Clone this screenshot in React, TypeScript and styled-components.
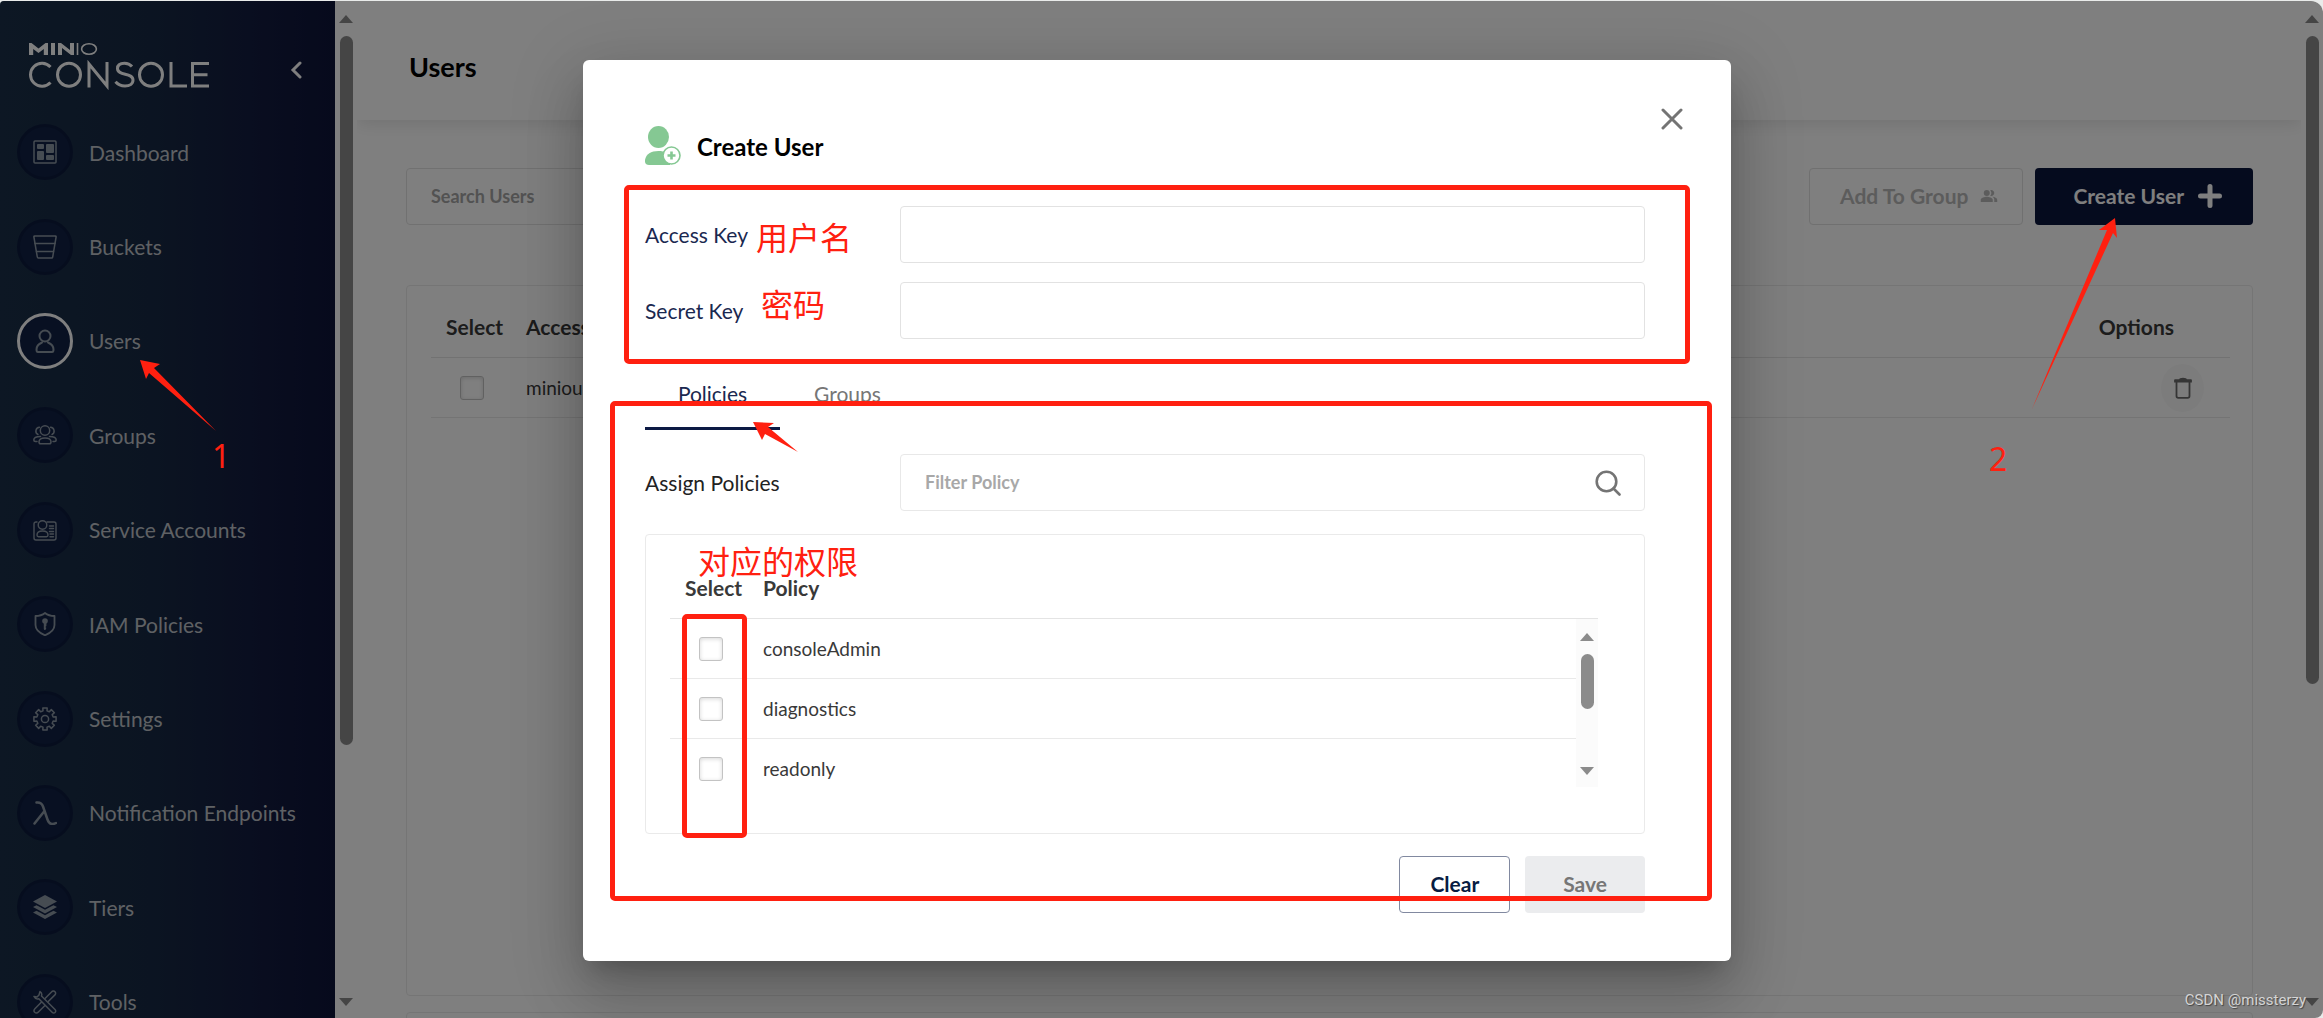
import React from "react";
import styled, { createGlobalStyle, css } from "styled-components";
import { MdPeopleAlt } from "react-icons/md";

const RED = "#ff2010";
const LATO = `Lato, "Noto Sans", sans-serif`;

const GlobalStyle = createGlobalStyle`
  *, *::before, *::after { box-sizing: border-box; }
  html, body, #root { height: 100%; }
  body { margin: 0; background: #e9ebea; font-family: ${LATO}; overflow: hidden; }
  button, input { font-family: inherit; }
  h1, h2 { margin: 0; }
`;

const Screen = styled.div`
  position: relative;
  height: 100%;
  padding-top: 1px;
`;

const Page = styled.div`
  display: flex;
  height: 100%;
  background: #fff;
  border-radius: 4px 12px 8px 0;
  overflow: hidden;
`;

/* Scroll bars */
const Track = styled.div<{ $tint?: string }>`
  display: flex;
  flex-direction: column;
  align-items: center;
  flex: none;
  width: 22px;
  padding: 14px 0 12px;
  background: ${(p) => p.$tint ?? "#fefefe"};
`;
const Arrow = styled.span<{ $down?: boolean }>`
  flex: none;
  border: 7px solid transparent;
  border-top-width: ${(p) => (p.$down ? 8 : 0)}px;
  border-bottom-width: ${(p) => (p.$down ? 0 : 8)}px;
  border-top-color: #8b8b8b;
  border-bottom-color: #8b8b8b;
`;
const ThumbLane = styled.div`
  flex: 1;
  padding: 13px 0;
`;
const Thumb = styled.div<{ $size: string }>`
  width: 13px;
  height: ${(p) => p.$size};
  border-radius: 7px;
  background: #8b8b8b;
`;
function ScrollBar({ size, tint }: { size: string; tint?: string }) {
  return (
    <Track $tint={tint} aria-hidden="true">
      <Arrow />
      <ThumbLane>
        <Thumb $size={size} />
      </ThumbLane>
      <Arrow $down />
    </Track>
  );
}

/* Sidebar */
const Sidebar = styled.aside`
  flex: none;
  width: 335px;
  height: 100%;
  overflow: hidden;
  background: linear-gradient(90deg, #1a2f48 0%, #172944 45%, #131c40 75%, #0d1439 100%);
`;
const Brand = styled.div`
  display: flex;
  align-items: flex-start;
  justify-content: space-between;
  height: 104px;
  padding: 41px 33px 0 28px;
`;
const Collapse = styled.button`
  display: flex;
  margin-top: 19px;
  padding: 0;
  border: 0;
  background: none;
  color: #fff;
`;
const NavList = styled.nav`
  display: grid;
  grid-auto-rows: 1fr;
  height: 944px;
`;
const NavLink = styled.a`
  display: flex;
  align-items: center;
  gap: 16px;
  padding-left: 17px;
  color: #bfc2c8;
  font-size: 21px;
  text-decoration: none;
`;
const NavBadge = styled.span<{ $active?: boolean }>`
  display: grid;
  place-items: center;
  width: 56px;
  height: 56px;
  border: 3px solid ${(p) => (p.$active ? "#fff" : "#0d1b3d")};
  border-radius: 50%;
  background: #102145;
  color: #8d98a5;
  svg { width: 24px; height: 24px; }
`;

const Line = ({ children, width = 1.5 }: { children: React.ReactNode; width?: number }) => (
  <svg viewBox="0 0 24 24" fill="none" stroke="currentColor" strokeWidth={width} strokeLinejoin="round" strokeLinecap="round">
    {children}
  </svg>
);

const DashboardIcon = () => (
  <Line>
    <rect x="1" y="1" width="22" height="22" rx="1" />
    <g fill="currentColor" stroke="none">
      <rect x="4" y="4" width="7" height="5" rx="1" />
      <rect x="13" y="4" width="8" height="9" rx="1" />
      <rect x="4" y="11" width="7" height="9" rx="1" />
      <rect x="13" y="15" width="8" height="5" rx="1" />
    </g>
  </Line>
);
const BucketIcon = () => (
  <Line>
    <path d="M1.500 1h21c.5 0 .7.3.6 1l-3.400 20c-.1.600-.4 1-1 1H5.300c-.6 0-.9-.4-1-1L.9 2c-.1-.7.1-1 .6-1z" />
    <path d="M2 8.500h20M3.500 16.500h17" />
  </Line>
);
const UserIcon = () => (
  <Line width={2}>
    <circle cx="12" cy="7" r="5.500" />
    <path d="M9 13.500c-3.500 1.500-5.500 4-5.500 7 0 1.500.5 2.500 1.500 2.500h14c1 0 1.500-1 1.500-2.500 0-3-2-5.500-5.500-7" />
  </Line>
);
const GroupsIcon = () => (
  <Line width={1.5}>
    <circle cx="12" cy="7.500" r="4.700" />
    <path d="M12 15c-3.500 0-6 1.500-6 4 0 1.200.6 1.800 1.700 1.800h8.600c1.100 0 1.700-.6 1.700-1.800 0-2.500-2.500-4-6-4z" />
    <path d="M6.500 4.300a3.800 3.800 0 0 0-1.500 7.200M17.500 4.300a3.800 3.800 0 0 1 1.500 7.200" />
    <path d="M7.500 13.500c-4 0-6.700 1.200-6.700 3.500 0 1 .6 1.500 1.700 1.500h1.500M16.500 13.500c4 0 6.700 1.200 6.700 3.500 0 1-.6 1.500-1.700 1.500H20" />
  </Line>
);
const ServiceIcon = () => (
  <Line width={1.4}>
    <path d="M4 4H3A2 2 0 0 0 1 6v14a2 2 0 0 0 2 2h18a2 2 0 0 0 2-2V6a2 2 0 0 0-2-2h-7" />
    <circle cx="9.500" cy="7" r="4.300" />
    <path d="M9.500 13c-3.200 0-5.500 1.500-5.500 4 0 1.200.5 1.700 1.500 1.700h8c1 0 1.500-.5 1.500-1.700 0-2.500-2.300-4-5.500-4z" />
    <path d="M16.500 8h4M16.500 10.500h4M16.500 13.500h4M17 16h3.500M17 18.700h3.500" />
  </Line>
);
const ShieldIcon = () => (
  <Line width={1.800}>
    <path d="M12 1c2.500 2 6 3 9.500 3v9c0 5-4 8-9.500 10.300C6.500 21 2.500 18 2.500 13V4C6 4 9.500 3 12 1z" />
    <g fill="currentColor" stroke="none">
      <circle cx="12" cy="9" r="2.800" />
      <path d="M10.800 10h2.600v4l-1 1 1 1-1 2h-1l-.6-1z" />
    </g>
  </Line>
);
const teeth = Array.from({ length: 8 }, (_, i) => {
  const at = (r: number, deg: number) => {
    const a = ((i * 45 + deg) * Math.PI) / 180;
    return `${(12 + r * Math.sin(a)).toFixed(2)} ${(12 - r * Math.cos(a)).toFixed(2)}`;
  };
  return `${i ? "L" : "M"}${at(8.4, -14)}L${at(11.3, -11)}L${at(11.3, 11)}L${at(8.4, 14)}`;
}).join("");
const GearIcon = () => (
  <Line width={1.5}>
    <path d={`${teeth}Z`} />
    <circle cx="12" cy="12" r="3.600" />
  </Line>
);
const LambdaIcon = () => (
  <Line width={2.5}>
    <path d="M3.500 1.500c4-.5 5.500 1 6.500 4l4.500 13c1 3 2.500 4.500 5 4.500 1.500 0 2.500-.4 3.500-1M11.500 10L1.500 22.500" />
  </Line>
);
const TiersIcon = () => (
  <svg viewBox="0 0 24 24" fill="currentColor">
    <path d="M12 0l12 6.500-12 6.500L0 6.500z" />
    <path d="M0 12l3.500-1.800L7 12l5 2.800 5-2.800 3.500-1.800L24 12l-12 6.500z" />
    <path d="M0 17.500l3.500-1.800 3.500 1.800 5 2.800 5-2.800 3.500-1.800 3.500 1.800L12 24z" />
  </svg>
);
const ToolsIcon = () => (
  <Line width={1.5}>
    <path d="M15.500 11.300l6.200-6.200c1.200-1.200 1.200-2.500.3-3.400s-2.500-.8-3.500.3l-6.200 6.200M8.300 12.300l-6.400 6.400c-1.200 1.200-1.200 2.700-.2 3.600s2.600.9 3.700-.3l6.300-6.200" />
    <path d="M7 1.500c1.500 1 2 3 1.500 4.500L22 19.500c1 1 .9 2.300.1 3s-2.100.6-3-.3L5.800 8.700C4 9.200 2 8.600 1 6.500l3 .5 2-2z" />
  </Line>
);

const NAV: [string, React.FC][] = [
  ["Dashboard", DashboardIcon],
  ["Buckets", BucketIcon],
  ["Users", UserIcon],
  ["Groups", GroupsIcon],
  ["Service Accounts", ServiceIcon],
  ["IAM Policies", ShieldIcon],
  ["Settings", GearIcon],
  ["Notification Endpoints", LambdaIcon],
  ["Tiers", TiersIcon],
  ["Tools", ToolsIcon],
];

const Logo = () => (
  <svg width="182" height="48" viewBox="0 0 182 48" fill="none" stroke="#fff" role="img" aria-label="MinIO Console">
    <g fill="#fff" stroke="none">
      <path d="M1 13V1h2.500l7 5.500 7-5.500H20v12h-4.200V7l-5.300 4-5.300-4v6z" />
      <path d="M23 1h4v12h-4zM30 13V1h3l9 7V1h4v12h-3l-9-7v7z" />
    </g>
    <path d="M49.500 1v12" strokeWidth="1.600" />
    <ellipse cx="61" cy="7" rx="7.400" ry="5.300" strokeWidth="1.600" />
    <g strokeWidth="3">
      <path d="M22.500 25A11.500 11.500 0 1 0 22.500 40.500" />
      <circle cx="41" cy="32.700" r="11.500" />
      <path d="M61 45.500V22L79 44V20" />
      <path d="M104 24.500c-2-2.300-4.500-3.300-7.500-3.300-4.300 0-7 2-7 5.300 0 8 15.500 3.500 15.500 11.500 0 4-3.500 6-8 6-4 0-7.200-1.500-9.500-4.200" />
      <circle cx="123" cy="32.700" r="11.500" />
      <path d="M143 20v24h16M181 21.500h-16.500V44H181M164.500 32.700h15" />
    </g>
  </svg>
);

/* Main area */
const Main = styled.main`
  display: flex;
  flex-direction: column;
  flex: 1;
  min-width: 0;
  overflow: hidden;
`;
const PageHeader = styled.header`
  display: flex;
  align-items: center;
  flex: none;
  height: 119px;
  padding: 12px 52px 0;
  box-shadow: 0 4px 16px rgba(0, 0, 0, 0.1);
`;
const PageTitle = styled.h1`
  font-size: 27px;
  line-height: 32px;
  font-weight: 700;
`;
const Content = styled.div`
  display: flex;
  flex-direction: column;
  flex: none;
  padding: 48px 48px 0 49px;
`;
const Toolbar = styled.div`
  display: flex;
  align-items: center;
  gap: 12px;
  margin-bottom: 60px;
`;
const field = css`
  height: 57px;
  border: 1px solid #e2e2e2;
  border-radius: 4px;
  background: #fff;
  padding: 0 24px 2px;
  font-size: 18px;
  font-weight: 700;
  color: #393939;
  &::placeholder { color: #a5a5a5; opacity: 1; }
`;
const SearchInput = styled.input`
  ${field}
  flex: 0 1 60%;
  min-width: 0;
  margin-right: auto;
`;
const Button = styled.button<{ $kind: "primary" | "outline" | "ghost" | "disabled" }>`
  display: inline-flex;
  align-items: center;
  justify-content: center;
  gap: 12px;
  height: 57px;
  padding: 0 30px 2px;
  border-radius: 4px;
  border: 1px solid transparent;
  background: #fff;
  font-size: 21px;
  font-weight: 700;
  white-space: nowrap;
  ${(p) => p.$kind === "primary" && css`background: #0b163c; color: #fff; gap: 14px; padding: 0 30px 2px 37px;`}
  ${(p) => p.$kind === "outline" && css`border-color: #8189a0; color: #081c42;`}
  ${(p) => p.$kind === "ghost" && css`border-color: #e0e0e0; color: #b9b9b9; padding: 0 24px 2px 30px;`}
  ${(p) => p.$kind === "disabled" && css`background: #ebecee; color: #767676; padding: 0 37px 2px;`}
`;
const Card = styled.section`
  flex: none;
  border: 1px solid #eaeaea;
  border-radius: 4px;
`;
const UsersCard = styled(Card)`
  height: 711px;
  padding: 12px 22px 0 24px;
  margin-bottom: 16px;
`;
const MoreCard = styled(Card)`
  height: 60px;
`;
const Table = styled.table`
  width: 100%;
  border-collapse: separate;
  border-spacing: 0;
  table-layout: fixed;
  color: #393939;
  text-align: left;
`;
const HeadCell = styled.th<{ $w?: number; $left?: number; $right?: boolean }>`
  width: ${(p) => (p.$w ? `${p.$w}px` : "auto")};
  height: 60px;
  padding: ${(p) => (p.$right ? "0 56px 2px 0" : `0 0 2px ${p.$left ?? 0}px`)};
  border-bottom: 1px solid #e4e4e4;
  font-size: 21px;
  font-weight: 700;
  text-align: ${(p) => (p.$right ? "right" : "left")};
`;
const Cell = styled.td<{ $left?: number; $right?: boolean }>`
  height: 60px;
  padding: ${(p) => (p.$right ? "0 26px 0 0" : `0 0 0 ${p.$left ?? 0}px`)};
  border-bottom: 1px solid #e9e9e9;
  font-size: 19px;
  vertical-align: middle;
  button { margin-left: auto; }
`;
const CheckBox = styled.input`
  display: block;
  appearance: none;
  width: 24px;
  height: 24px;
  margin: 0;
  border: 1px solid #c3c3c3;
  border-radius: 3px;
  background: #fff;
  box-shadow: inset 0 1px 4px rgba(0, 0, 0, 0.16);
`;
const RoundButton = styled.button`
  display: grid;
  place-items: center;
  width: 43px;
  height: 48px;
  padding: 0;
  border: 0;
  border-radius: 50%;
  background: #f9f9f9;
  color: #6b6b6b;
`;

/* Dialog */
const Backdrop = styled.div`
  position: absolute;
  inset: 1px 0 0;
  display: grid;
  place-items: center;
  padding: 2px 9px 0 0;
  border-radius: 4px 12px 8px 0;
  background: rgba(0, 0, 0, 0.5);
`;
const Dialog = styled.section`
  position: relative;
  width: 1148px;
  max-width: calc(100% - 96px);
  padding: 66px 86px 48px 62px;
  border-radius: 6px;
  background: #fff;
  box-shadow: 0 16px 22px -10px rgba(0, 0, 0, 0.2), 0 36px 57px 4px rgba(0, 0, 0, 0.14),
    0 14px 69px 12px rgba(0, 0, 0, 0.12);
`;
const CloseButton = styled.button`
  position: absolute;
  top: 48px;
  right: 48px;
  display: flex;
  padding: 0;
  border: 0;
  background: none;
  color: #747474;
`;
const DialogTitle = styled.h2`
  display: flex;
  align-items: center;
  gap: 16px;
  height: 40px;
  margin-bottom: 40px;
  font-size: 24px;
  font-weight: 700;
`;
const FormRow = styled.div<{ $after: number }>`
  display: grid;
  grid-template-columns: 255px 1fr;
  align-items: center;
  margin-bottom: ${(p) => p.$after}px;
`;
const Label = styled.label<{ $plain?: boolean }>`
  font-size: 21px;
  color: ${(p) => (p.$plain ? "#222" : "#1a2850")};
`;
const TextInput = styled.input`
  ${field}
  width: 100%;
`;
const FilterBox = styled.div`
  display: flex;
  align-items: center;
  height: 57px;
  padding: 0 23px 0 24px;
  border: 1px solid #e8e8e8;
  border-radius: 4px;
  color: #747474;
`;
const FilterInput = styled.input`
  flex: 1;
  min-width: 0;
  padding: 0 0 2px;
  border: 0;
  outline: 0;
  background: none;
  font-size: 18px;
  font-weight: 700;
  &::placeholder { color: #a8a8a8; opacity: 1; }
`;
const TabList = styled.div`
  display: flex;
  margin-bottom: 24px;
`;
const Tab = styled.button<{ $active?: boolean }>`
  width: 135px;
  height: 72px;
  padding: 1px 0 0;
  border: 0;
  border-bottom: 3px solid ${(p) => (p.$active ? "#0c1a44" : "transparent")};
  background: none;
  color: ${(p) => (p.$active ? "#1a2850" : "#767676")};
  font-size: 21px;
`;
const PolicyCard = styled(Card)`
  height: 300px;
  margin-bottom: 22px;
  padding: 24px 46px 0 24px;
`;
const PolicyScroll = styled.div`
  display: flex;
  height: 168px;
  overflow: hidden;
`;
const Actions = styled.div`
  display: flex;
  justify-content: flex-end;
  gap: 15px;
`;

/* Mark-up over the screen */
const Overlay = styled.div`
  position: absolute;
  inset: 0;
  pointer-events: none;
  overflow: hidden;
`;
const Frame = styled.div<{ $x: number; $y: number; $w: number; $h: number }>`
  position: absolute;
  left: ${(p) => p.$x}px;
  top: ${(p) => p.$y}px;
  width: ${(p) => p.$w}px;
  height: ${(p) => p.$h}px;
  border: 5px solid ${RED};
  border-radius: 5px;
`;
const Note = styled.span<{ $x: number; $y: number }>`
  position: absolute;
  left: ${(p) => p.$x}px;
  top: ${(p) => p.$y}px;
  color: ${RED};
  font: 400 32px/40px "Noto Sans CJK SC", sans-serif;
  white-space: nowrap;
`;
const StepNumber = styled(Note)`
  font-family: "Noto Sans", sans-serif;
`;
const Arrows = styled.svg`
  position: absolute;
  inset: 0;
  width: 100%;
  height: 100%;
  fill: ${RED};
`;
const Watermark = styled.span`
  position: absolute;
  right: 17px;
  bottom: 8px;
  color: #d4d4d4;
  font: 400 15px/20px Roboto, "Liberation Sans", sans-serif;
  text-shadow: 1px 1px 1px #444;
`;

const POLICIES = ["consoleAdmin", "diagnostics", "readonly"];

export default function App() {
  return (
    <Screen>
      <GlobalStyle />
      <Page>
        <Sidebar>
          <Brand>
            <Logo />
            <Collapse aria-label="Collapse menu">
              <svg width="12" height="18" viewBox="0 0 12 18" fill="none" stroke="currentColor" strokeWidth="3">
                <path d="M10 2L3 9l7 7" strokeLinecap="round" />
              </svg>
            </Collapse>
          </Brand>
          <NavList>
            {NAV.map(([name, Icon]) => (
              <NavLink href="#" key={name}>
                <NavBadge $active={name === "Users"}>
                  <Icon />
                </NavBadge>
                {name}
              </NavLink>
            ))}
          </NavList>
        </Sidebar>
        <ScrollBar size="calc(75% - 3px)" />
        <Main>
          <PageHeader>
            <PageTitle>Users</PageTitle>
          </PageHeader>
          <Content>
            <Toolbar>
              <SearchInput placeholder="Search Users" aria-label="Search Users" />
              <Button $kind="ghost" disabled>
                Add To Group <MdPeopleAlt size={18} />
              </Button>
              <Button $kind="primary">
                Create User
                <svg width="24" height="24" viewBox="0 0 24 24" stroke="currentColor" strokeWidth="5" strokeLinecap="round">
                  <path d="M12 2.500v19M2.500 12h19" />
                </svg>
              </Button>
            </Toolbar>
            <UsersCard>
              <Table>
                <thead>
                  <tr>
                    <HeadCell $w={95} $left={15}>Select</HeadCell>
                    <HeadCell>Access Key</HeadCell>
                    <HeadCell $right>Options</HeadCell>
                  </tr>
                </thead>
                <tbody>
                  <tr>
                    <Cell $left={29}>
                      <CheckBox type="checkbox" aria-label="miniouser" />
                    </Cell>
                    <Cell>miniouser</Cell>
                    <Cell $right>
                      <RoundButton aria-label="Delete">
                        <svg width="18" height="22" viewBox="0 0 18 22" fill="none" stroke="currentColor" strokeWidth="1.800">
                          <path d="M2.500 5v14c0 1 .8 1.800 1.800 1.800h9.400c1 0 1.800-.8 1.800-1.800V5M1 3.500h16" />
                          <path d="M1 3.500h16v1H1zM6 2.500c0-1 6-1 6 0" />
                        </svg>
                      </RoundButton>
                    </Cell>
                  </tr>
                </tbody>
              </Table>
            </UsersCard>
            <MoreCard />
          </Content>
        </Main>
        <ScrollBar size="calc(68% + 3px)" />
      </Page>

      <Backdrop>
        <Dialog role="dialog" aria-labelledby="dialog-title">
          <CloseButton aria-label="Close">
            <svg width="22" height="22" viewBox="0 0 22 22" stroke="currentColor" strokeWidth="3" strokeLinecap="round">
              <path d="M2 2l18 18M20 2L2 20" />
            </svg>
          </CloseButton>
          <DialogTitle id="dialog-title">
            <svg width="36" height="40" viewBox="0 0 36 40" fill="#85c893">
              <ellipse cx="13.500" cy="11" rx="10.500" ry="11" />
              <path d="M0 34c1-6 6-9 13.500-9 3 0 6 .5 8 1.500V39H4c-3 0-4.500-2-4-5z" />
              <path d="M13 39h12V30H13z" />
              <circle cx="26.500" cy="29.500" r="8.500" fill="#fff" stroke="#85c893" strokeWidth="1.600" />
              <path d="M26.500 25.500v8M22.500 29.500h8" stroke="#85c893" strokeWidth="2.600" />
            </svg>
            Create User
          </DialogTitle>
          <FormRow $after={19}>
            <Label htmlFor="access">Access Key</Label>
            <TextInput id="access" />
          </FormRow>
          <FormRow $after={19}>
            <Label htmlFor="secret">Secret Key</Label>
            <TextInput id="secret" type="password" />
          </FormRow>
          <TabList role="tablist">
            <Tab role="tab" aria-selected="true" $active>Policies</Tab>
            <Tab role="tab" aria-selected="false">Groups</Tab>
          </TabList>
          <FormRow $after={23}>
            <Label htmlFor="filter" $plain>Assign Policies</Label>
            <FilterBox>
              <FilterInput id="filter" placeholder="Filter Policy" />
              <svg width="26" height="26" viewBox="0 0 26 26" fill="none" stroke="currentColor" strokeWidth="2.600" strokeLinecap="round">
                <circle cx="11.500" cy="11.500" r="9.800" />
                <path d="M18.500 18.500l6 6" />
              </svg>
            </FilterBox>
          </FormRow>
          <PolicyCard>
            <Table>
              <thead>
                <tr>
                  <HeadCell $w={93} $left={15}>Select</HeadCell>
                  <HeadCell>Policy</HeadCell>
                </tr>
              </thead>
            </Table>
            <PolicyScroll>
              <Table>
                <colgroup>
                  <col width="93" />
                  <col />
                </colgroup>
                <tbody>
                  {POLICIES.map((name) => (
                    <tr key={name}>
                      <Cell $left={29}>
                        <CheckBox type="checkbox" aria-label={name} />
                      </Cell>
                      <Cell>{name}</Cell>
                    </tr>
                  ))}
                </tbody>
              </Table>
              <ScrollBar size="55px" tint="#fbfbfb" />
            </PolicyScroll>
          </PolicyCard>
          <Actions>
            <Button $kind="outline">Clear</Button>
            <Button $kind="disabled" disabled>Save</Button>
          </Actions>
        </Dialog>
      </Backdrop>

      <Overlay>
        <Frame $x={624} $y={185} $w={1066} $h={179} />
        <Frame $x={610} $y={401} $w={1102} $h={500} />
        <Frame $x={682} $y={614} $w={65} $h={224} />
        <Note $x={756} $y={216}>用户名</Note>
        <Note $x={761} $y={283}>密码</Note>
        <Note $x={698} $y={540}>对应的权限</Note>
        <StepNumber $x={212} $y={436}>1</StepNumber>
        <StepNumber $x={1989} $y={439}>2</StepNumber>
        <Arrows>
          <path d="M140 360l20 4-6 4 62 63-67-58-3 6z" />
          <path d="M753 422l21 1-6 4 30 25-33-18-3 6z" />
          <path d="M2115 218l2 20-4-5-81 176 75-179-8 0z" />
        </Arrows>
        <Watermark>CSDN @missterzy</Watermark>
      </Overlay>
    </Screen>
  );
}
